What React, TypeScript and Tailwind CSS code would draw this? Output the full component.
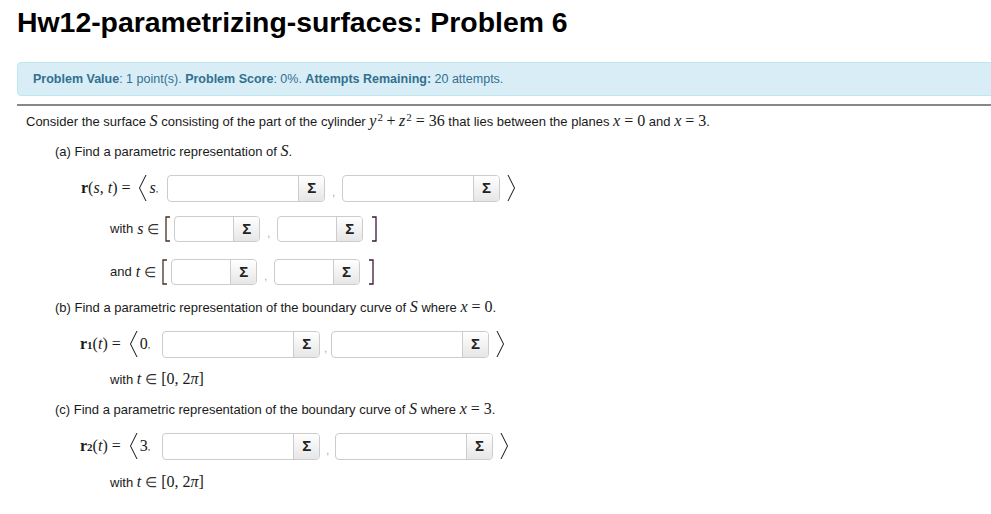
import React from 'react'

const serif = "font-['Liberation_Serif','Times_New_Roman',serif]"

function I({ children }: { children: React.ReactNode }) {
  return <span className={`${serif} italic text-[16px]`}>{children}</span>
}

function M({ children, bold }: { children: React.ReactNode; bold?: boolean }) {
  return <span className={`${serif} text-[16px] ${bold ? 'font-bold' : ''}`}>{children}</span>
}

// relation symbol with TeX-like thick spacing
function Rel({ children }: { children: React.ReactNode }) {
  return <span className={`${serif} text-[16px] mx-[4px]`}>{children}</span>
}

function In() {
  return <span className={`${serif} text-[14px] mx-[4px] text-[#333]`}>∈</span>
}

function Sup({ children }: { children: React.ReactNode }) {
  return <sup className={`${serif} text-[11px] ml-[1px]`}>{children}</sup>
}

function AngleL() {
  return (
    <svg width="9" height="28" viewBox="0 0 9 28" className="ml-[4px] mr-[2px]">
      <polyline points="8,1 1.5,14 8,27" fill="none" stroke="#111" strokeWidth="1" />
    </svg>
  )
}

function AngleR() {
  return (
    <svg width="9" height="28" viewBox="0 0 9 28" className="ml-[7px]">
      <polyline points="1,1 7.5,14 1,27" fill="none" stroke="#111" strokeWidth="1" />
    </svg>
  )
}

function BracketL() {
  return (
    <svg width="6" height="26" viewBox="0 0 6 26" className="ml-[2px] mr-[3px]">
      <polyline points="5,1 1,1 1,25 5,25" fill="none" stroke="#4a3020" strokeWidth="1.3" />
    </svg>
  )
}

function BracketR() {
  return (
    <svg width="6" height="26" viewBox="0 0 6 26" className="ml-2">
      <polyline points="1,1 5,1 5,25 1,25" fill="none" stroke="#3a1a3a" strokeWidth="1.3" />
    </svg>
  )
}

function MathInput({ w, h = 27 }: { w: number; h?: number }) {
  return (
    <div className="flex border border-[#cccccc] rounded-[4px] overflow-hidden bg-white" style={{ height: h }}>
      <div style={{ width: w }} />
      <div className="w-[26px] border-l border-[#cccccc] bg-gradient-to-b from-white to-[#e6e6e6] flex items-center justify-center">
        <span className="font-['Liberation_Sans',Arial,sans-serif] font-bold text-[15px] text-[#222]">Σ</span>
      </div>
    </div>
  )
}

function Comma({ gap }: { gap: string }) {
  return <span className={`${gap} text-[10px] text-[#7aa7c7] self-center pt-2`}>,</span>
}

export default function App() {
  return (
    <div className="w-[991px] h-[514px] overflow-hidden bg-white font-['Liberation_Sans',Arial,sans-serif] text-[#222]">
      <div className="w-[1060px] pl-[17px]">
        <h1 className="pt-[7px] text-[28.4px] font-bold text-black leading-[30px]">Hw12-parametrizing-surfaces: Problem 6</h1>

        <div className="mt-[25px] h-[34px] flex items-center pl-[15px] bg-[#d9edf7] border border-[#bce8f1] rounded-[4px] text-[#31708f] text-[12.5px]">
          <span>
            <b>Problem Value</b>: 1 point(s). <b>Problem Score</b>: 0%. <b>Attempts Remaining:</b> 20 attempts.
          </span>
        </div>

        <div className="mt-[8px] h-[2px] bg-[#888888]" />

        <div className="text-[13px] text-[#1a1a1a]">
          <p className="mt-[5px] pl-[9px] h-[20px] leading-[20px] whitespace-nowrap">
            Consider the surface <I>S</I> consisting of the part of the cylinder <I>y</I><Sup>2</Sup>
            <span className={`${serif} text-[16px] mx-[3.5px]`}>+</span><I>z</I><Sup>2</Sup><Rel>=</Rel><M>36</M> that lies between the planes <I>x</I><Rel>=</Rel><M>0</M> and <I>x</I><Rel>=</Rel><M>3</M>.
          </p>

          <p className="mt-[10px] pl-[38px] h-[20px] leading-[20px]">
            (a) Find a parametric representation of <I>S</I>.
          </p>

          <div className="mt-[13px] pl-[64px] flex items-center h-[28px]">
            <M bold>r</M><M>(</M><I>s</I><M>,&nbsp;</M><I>t</I><M>)</M><Rel>=</Rel>
            <AngleL />
            <I>s</I><span className="text-[9px] mr-[9px] self-end mb-[6px]">,</span>
            <MathInput w={130} />
            <Comma gap="mx-[7px]" />
            <MathInput w={130} />
            <AngleR />
          </div>

          <div className="mt-[14px] pl-[93px] flex items-center h-[26px]">
            <span>with</span>
            <span className="ml-[4px]"><I>s</I></span>
            <In />
            <BracketL />
            <MathInput w={58} h={26} />
            <Comma gap="mx-[7px]" />
            <MathInput w={58} h={26} />
            <BracketR />
          </div>

          <div className="mt-[17px] pl-[93px] flex items-center h-[26px]">
            <span>and</span>
            <span className="ml-[4px]"><I>t</I></span>
            <In />
            <BracketL />
            <MathInput w={58} h={26} />
            <Comma gap="mx-[7px]" />
            <MathInput w={58} h={26} />
            <BracketR />
          </div>

          <p className="mt-[12px] pl-[38px] h-[20px] leading-[20px]">
            (b) Find a parametric representation of the boundary curve of <I>S</I> where <I>x</I><Rel>=</Rel><M>0</M>.
          </p>

          <div className="mt-[13px] pl-[63px] flex items-center h-[28px]">
            <M bold>r</M><span className={`${serif} font-bold text-[11px] self-end mb-[5px]`}>1</span><M>(</M><I>t</I><M>)</M><Rel>=</Rel>
            <AngleL />
            <M>0</M><span className="text-[9px] mr-[12px] self-end mb-[6px]">,</span>
            <MathInput w={130} />
            <Comma gap="mx-[4px]" />
            <MathInput w={130} />
            <AngleR />
          </div>

          <p className="mt-[11px] pl-[93px] h-[20px] leading-[20px]">
            with <I>t</I><In /><M>[0,&nbsp;2</M><I>π</I><M>]</M>
          </p>

          <p className="mt-[10px] pl-[38px] h-[20px] leading-[20px]">
            (c) Find a parametric representation of the boundary curve of <I>S</I> where <I>x</I><Rel>=</Rel><M>3</M>.
          </p>

          <div className="mt-[13px] pl-[63px] flex items-center h-[28px]">
            <M bold>r</M><span className={`${serif} font-bold text-[11px] self-end mb-[5px]`}>2</span><M>(</M><I>t</I><M>)</M><Rel>=</Rel>
            <AngleL />
            <M>3</M><span className="text-[9px] mr-[12px] self-end mb-[6px]">,</span>
            <MathInput w={130} />
            <Comma gap="mx-[6px]" />
            <MathInput w={130} />
            <AngleR />
          </div>

          <p className="mt-[12px] pl-[93px] h-[20px] leading-[20px]">
            with <I>t</I><In /><M>[0,&nbsp;2</M><I>π</I><M>]</M>
          </p>
        </div>
      </div>
    </div>
  )
}
